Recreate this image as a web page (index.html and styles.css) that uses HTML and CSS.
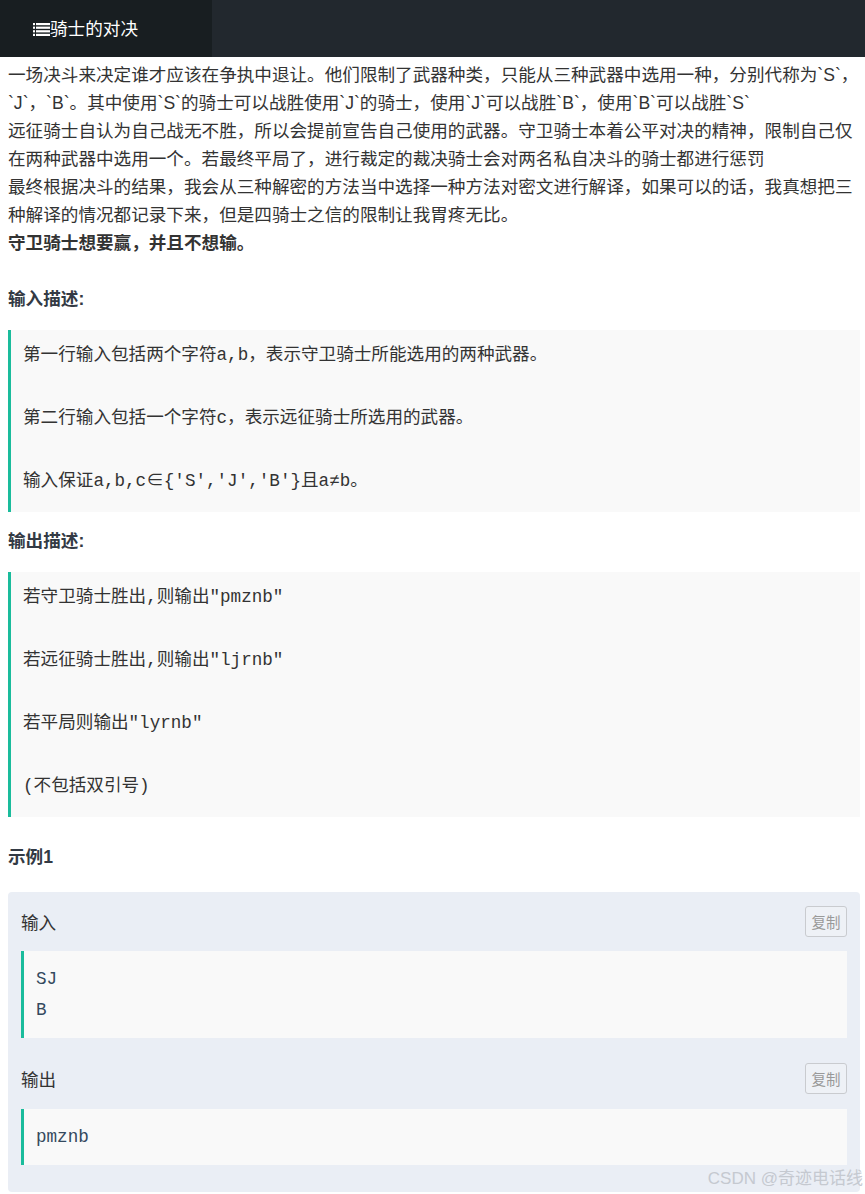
FILE: index.html
```html
<!DOCTYPE html>
<html lang="zh-CN">
<head>
<meta charset="utf-8">
<title>骑士的对决</title>
<link rel="stylesheet" href="styles.css">
</head>
<body>
<header class="topbar">
  <div class="tab">
    <svg class="list-icon" width="17" height="13" viewBox="0 0 17 13">
      <g fill="#fff">
        <rect x="0" y="0" width="2" height="2.2"/>
        <rect x="3" y="0" width="14" height="2.2"/>
        <rect x="0" y="3.6" width="2" height="2.2"/>
        <rect x="3" y="3.6" width="14" height="2.2"/>
        <rect x="0" y="7.2" width="2" height="2.2"/>
        <rect x="3" y="7.2" width="14" height="2.2"/>
        <rect x="0" y="10.8" width="2" height="2.2"/>
        <rect x="3" y="10.8" width="14" height="2.2"/>
      </g>
    </svg>
    <span class="tab-title">骑士的对决</span>
  </div>
</header>
<main class="content">
  <div class="desc">
    一场决斗来决定谁才应该在争执中退让。他们限制了武器种类，只能从三种武器中选用一种，分别代称为`S`，`J`，`B`。其中使用`S`的骑士可以战胜使用`J`的骑士，使用`J`可以战胜`B`，使用`B`可以战胜`S`<br>
    远征骑士自认为自己战无不胜，所以会提前宣告自己使用的武器。守卫骑士本着公平对决的精神，限制自己仅在两种武器中选用一个。若最终平局了，进行裁定的裁决骑士会对两名私自决斗的骑士都进行惩罚<br>
    最终根据决斗的结果，我会从三种解密的方法当中选择一种方法对密文进行解译，如果可以的话，我真想把三种解译的情况都记录下来，但是四骑士之信的限制让我胃疼无比。<br>
    <strong>守卫骑士想要赢，并且不想输。</strong>
  </div>

  <h3 class="section-title first">输入描述:</h3>
  <pre class="block">第一行输入包括两个字符a,b，表示守卫骑士所能选用的两种武器。

第二行输入包括一个字符c，表示远征骑士所选用的武器。

输入保证a,b,c∈{'S','J','B'}且a≠b。</pre>

  <h3 class="section-title">输出描述:</h3>
  <pre class="block">若守卫骑士胜出,则输出"pmznb"

若远征骑士胜出,则输出"ljrnb"

若平局则输出"lyrnb"

(不包括双引号)</pre>

  <h3 class="section-title example-title">示例1</h3>
  <div class="example">
    <div class="ex-row">
      <span class="ex-label">输入</span>
      <button class="copy-btn">复制</button>
    </div>
    <pre class="ex-pre">SJ
B</pre>
    <div class="ex-row second">
      <span class="ex-label">输出</span>
      <button class="copy-btn">复制</button>
    </div>
    <pre class="ex-pre">pmznb</pre>
    <div class="watermark">CSDN @奇迹电话线</div>
  </div>
</main>
</body>
</html>
```

FILE: styles.css
```css
html, body {
  margin: 0;
  padding: 0;
  background: #ffffff;
}

body {
  font-family: "Liberation Sans", "Noto Sans CJK SC", sans-serif;
  font-size: 17.6px;
  color: #333333;
}

.topbar {
  height: 57px;
  background: #22282e;
  display: flex;
}

.tab {
  width: 212px;
  background: #181e21;
  display: flex;
  align-items: center;
  padding-left: 33px;
  box-sizing: border-box;
}

.list-icon {
  display: block;
  margin-top: 1px;
}

.tab-title {
  color: #ffffff;
  font-size: 17.6px;
  line-height: 24px;
}

.content {
  padding: 4px 5px 0 8px;
}

.desc {
  line-height: 28px;
  color: #333333;
}

.desc strong {
  font-weight: 700;
}

.section-title {
  font-size: 17.6px;
  font-weight: 700;
  line-height: 28px;
  color: #333a44;
  margin: 15px 0 17px;
}

.section-title.first {
  margin-top: 28px;
}

.section-title.example-title {
  margin-top: 26px;
  margin-bottom: 21px;
}

.block {
  margin: 0;
  background: #f9f9f9;
  border-left: 3px solid #1abc9c;
  padding: 10px 12px 14.5px 12px;
  font-family: "Liberation Mono", "Noto Sans CJK SC", monospace;
  font-size: 17.6px;
  line-height: 31.5px;
  color: #333333;
  white-space: pre-wrap;
}

.example {
  position: relative;
  background: #eaeef5;
  border-radius: 4px;
  padding: 14px 13px 27px 13px;
}

.ex-row {
  display: flex;
  justify-content: space-between;
  align-items: center;
  height: 31px;
  margin-bottom: 14px;
}

.ex-row.second {
  margin-top: 25px;
  margin-bottom: 15px;
}

.ex-label {
  font-size: 17.6px;
  color: #333333;
}

.copy-btn {
  width: 42px;
  height: 31px;
  padding: 0;
  border: 1px solid #c9cbcf;
  border-radius: 3px;
  background: #eef1f6;
  color: #999999;
  font-family: "Liberation Sans", "Noto Sans CJK SC", sans-serif;
  font-size: 14.5px;
}

.ex-pre {
  margin: 0;
  background: #f9f9f9;
  border-left: 3px solid #1abc9c;
  padding: 12.5px 12px 12.5px 12px;
  font-family: "Liberation Mono", "Noto Sans CJK SC", monospace;
  font-size: 17.6px;
  line-height: 31px;
  color: #34495e;
}

.watermark {
  position: absolute;
  right: -3px;
  bottom: 3px;
  font-size: 17px;
  line-height: 20px;
  color: #c5c9d0;
  white-space: nowrap;
}
```
